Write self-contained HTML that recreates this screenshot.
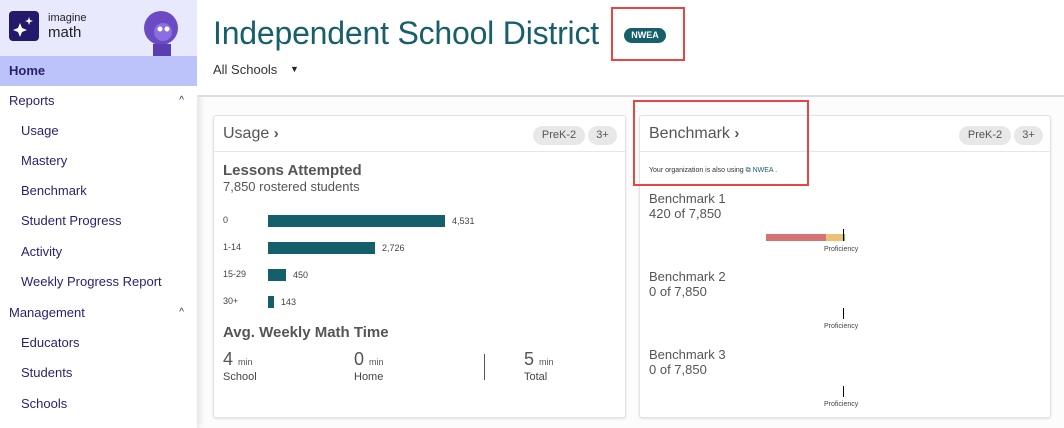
<!DOCTYPE html>
<html><head><meta charset="utf-8"><style>
*{box-sizing:border-box;margin:0;padding:0}
body{width:1064px;height:428px;overflow:hidden;font-family:"Liberation Sans",sans-serif;background:#fcfcfc;position:relative;color:#444}
.side{position:absolute;left:0;top:0;width:197px;height:428px;background:#fff;box-shadow:3px 0 6px rgba(0,0,0,.1)}
.logo{height:56px;background:#e8e9fc;position:relative}
.lb{position:absolute;left:9px;top:11px;width:30px;height:30px;background:#231a6b;border-radius:4px}
.nav{position:absolute;left:0;width:197px;height:30px;line-height:30px;font-size:13px;color:#2a1f6e}
.sub{padding-left:21px}.top{padding-left:9px}
.car{position:absolute;right:13px;top:0;font-size:10px}
.hdr{position:absolute;left:197px;top:0;right:0;height:97px;background:#fff;border-bottom:2px solid #dcdde2}
.card{position:absolute;top:115px;height:303px;background:#fff;border:1px solid #e2e2e2;border-radius:3px;box-shadow:0 1px 2px rgba(0,0,0,.1)}
.ch{height:36px;border-bottom:1px solid #e6e6e6;position:relative}
.ct{position:absolute;left:9px;top:9px;font-size:16px;color:#555}
.pill{position:absolute;top:10px;height:19px;line-height:19px;font-size:11px;color:#555;background:#e8e8e8;border-radius:10px;text-align:center}
.t{position:absolute;white-space:nowrap}
.bar{position:absolute;left:54px;height:12px;background:#13606b}
</style></head><body>
<div class="side">
 <div class="logo"><div class="lb"><svg width="30" height="30"><path d="M11 12l2 5 5 2-5 2-2 5-2-5-5-2 5-2z M20 6l1 3 3 1-3 1-1 3-1-3-3-1 3-1z" fill="#fff"/></svg></div>
 <div class="t" style="left:48px;top:12px;font-size:11px;color:#222">imagine</div>
 <div class="t" style="left:48px;top:24px;font-size:15px;color:#222">math</div>
 <svg style="position:absolute;left:136px;top:8px" width="50" height="48"><circle cx="25" cy="20" r="17" fill="#6a4bc4"/><circle cx="27" cy="24" r="9" fill="#8b6fe0"/><circle cx="24" cy="21" r="2.5" fill="#fff"/><circle cx="31" cy="21" r="2.5" fill="#fff"/><rect x="17" y="36" width="18" height="12" fill="#5a3db0"/></svg></div>
 <div class="nav top" style="top:56px;background:#bcc3fb;font-weight:bold">Home</div>
 <div class="nav top" style="top:86px">Reports<span class="car">^</span></div>
 <div class="nav sub" style="top:116px">Usage</div>
 <div class="nav sub" style="top:146px">Mastery</div>
 <div class="nav sub" style="top:176px">Benchmark</div>
 <div class="nav sub" style="top:206px">Student Progress</div>
 <div class="nav sub" style="top:237px">Activity</div>
 <div class="nav sub" style="top:267px">Weekly Progress Report</div>
 <div class="nav top" style="top:298px">Management<span class="car">^</span></div>
 <div class="nav sub" style="top:328px">Educators</div>
 <div class="nav sub" style="top:358px">Students</div>
 <div class="nav sub" style="top:389px">Schools</div>
</div>
<div class="hdr">
 <div class="t" style="left:16px;top:15px;font-size:32px;color:#175f6b;letter-spacing:-0.2px">Independent School District</div>
 <div class="t" style="left:427px;top:28px;width:42px;height:15px;border-radius:8px;background:#175f6b;color:#fff;font-size:9px;font-weight:bold;text-align:center;line-height:15px">NWEA</div>
 <div style="position:absolute;left:414px;top:7px;width:74px;height:54px;border:2px solid #e84545"></div>
 <div class="t" style="left:16px;top:62px;font-size:13px;color:#333">All Schools</div>
 <div class="t" style="left:93px;top:64px;font-size:9px;color:#222">▼</div>
</div>
<div class="card" style="left:213px;width:413px">
 <div class="ch"><div class="ct">Usage <b style="font-size:15px">›</b></div>
 <div class="pill" style="left:319px;width:52px">PreK-2</div><div class="pill" style="left:374px;width:29px">3+</div></div>
 <div class="t" style="left:9px;top:46px;font-size:15px;font-weight:bold;color:#555">Lessons Attempted</div>
 <div class="t" style="left:9px;top:63px;font-size:13px;color:#555">7,850 rostered students</div>
 <div class="t" style="left:9px;top:99px;font-size:9px">0</div><div class="bar" style="top:99px;width:177px"></div><div class="t" style="left:238px;top:100px;font-size:9px">4,531</div>
 <div class="t" style="left:9px;top:126px;font-size:9px">1-14</div><div class="bar" style="top:126px;width:107px"></div><div class="t" style="left:168px;top:127px;font-size:9px">2,726</div>
 <div class="t" style="left:9px;top:153px;font-size:9px">15-29</div><div class="bar" style="top:153px;width:18px"></div><div class="t" style="left:79px;top:154px;font-size:9px">450</div>
 <div class="t" style="left:9px;top:180px;font-size:9px">30+</div><div class="bar" style="top:180px;width:6px"></div><div class="t" style="left:67px;top:181px;font-size:9px">143</div>
 <div class="t" style="left:9px;top:208px;font-size:15px;font-weight:bold;color:#555">Avg. Weekly Math Time</div>
 <div class="t" style="left:9px;top:233px;font-size:18px;color:#555">4 <span style="font-size:9px">min</span></div>
 <div class="t" style="left:9px;top:255px;font-size:11px">School</div>
 <div class="t" style="left:140px;top:233px;font-size:18px;color:#555">0 <span style="font-size:9px">min</span></div>
 <div class="t" style="left:140px;top:255px;font-size:11px">Home</div>
 <div style="position:absolute;left:270px;top:238px;width:1px;height:26px;background:#555"></div>
 <div class="t" style="left:310px;top:233px;font-size:18px;color:#555">5 <span style="font-size:9px">min</span></div>
 <div class="t" style="left:310px;top:255px;font-size:11px">Total</div>
</div>
<div class="card" style="left:639px;width:412px">
 <div class="ch"><div class="ct">Benchmark <b style="font-size:15px">›</b></div>
 <div class="pill" style="left:319px;width:52px">PreK-2</div><div class="pill" style="left:374px;width:29px">3+</div></div>
 <div class="t" style="left:9px;top:51px;font-size:7px;color:#333">Your organization is also using <span style="color:#175f6b">⧉ NWEA</span> .</div>
 <div class="t" style="left:9px;top:75px;font-size:13px;color:#555">Benchmark 1</div>
 <div class="t" style="left:9px;top:90px;font-size:13px;color:#555">420 of 7,850</div>
 <div style="position:absolute;left:126px;top:118px;width:60px;height:7px;background:#d57372"></div>
 <div style="position:absolute;left:186px;top:118px;width:17px;height:7px;background:#ebc177"></div>
 <div style="position:absolute;left:203px;top:113px;width:1px;height:12px;background:#000"></div>
 <div style="position:absolute;left:204px;top:118px;width:1px;height:7px;background:#5c5"></div>
 <div class="t" style="left:184px;top:130px;font-size:7px">Proficiency</div>
 <div class="t" style="left:9px;top:153px;font-size:13px;color:#555">Benchmark 2</div>
 <div class="t" style="left:9px;top:168px;font-size:13px;color:#555">0 of 7,850</div>
 <div style="position:absolute;left:203px;top:192px;width:1px;height:11px;background:#000"></div>
 <div class="t" style="left:184px;top:207px;font-size:7px">Proficiency</div>
 <div class="t" style="left:9px;top:231px;font-size:13px;color:#555">Benchmark 3</div>
 <div class="t" style="left:9px;top:246px;font-size:13px;color:#555">0 of 7,850</div>
 <div style="position:absolute;left:203px;top:270px;width:1px;height:11px;background:#000"></div>
 <div class="t" style="left:184px;top:285px;font-size:7px">Proficiency</div>
</div>
<div style="position:absolute;left:633px;top:100px;width:176px;height:86px;border:2px solid #e84545"></div>
</body></html>
